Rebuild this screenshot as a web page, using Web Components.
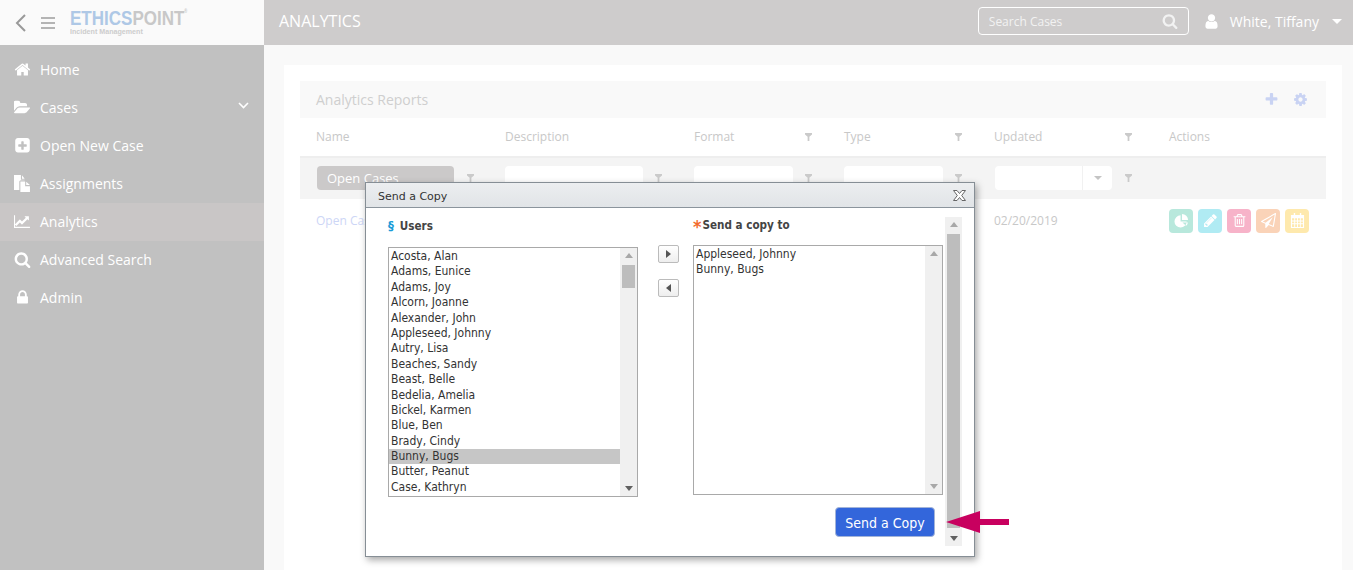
<!DOCTYPE html>
<html>
<head>
<meta charset="utf-8">
<title>Analytics</title>
<style>
  html, body { margin: 0; height: 100%; overflow: hidden; }
  body { font-family: "Open Sans", "Liberation Sans", sans-serif; background: #f9f9f9; }
</style>
</head>
<body>
<app-shell>
  <side-nav slot="side">
    <nav-item icon="home" label="Home"></nav-item>
    <nav-item icon="folder" label="Cases" expandable></nav-item>
    <nav-item icon="plusSquare" label="Open New Case"></nav-item>
    <nav-item icon="files" label="Assignments"></nav-item>
    <nav-item icon="chart" label="Analytics" active></nav-item>
    <nav-item icon="search" label="Advanced Search"></nav-item>
    <nav-item icon="lock" label="Admin"></nav-item>
  </side-nav>
  <top-bar slot="top" heading="ANALYTICS" user="White, Tiffany"></top-bar>
  <report-table></report-table>
  <copy-dialog slot="overlay"></copy-dialog>
</app-shell>

<script>
// FontAwesome-like glyphs, all as [viewBox, path]
const ICONS = {
  home: ['0 0 1792 1792', 'M1472 992v480q0 26-19 45t-45 19h-384v-384h-256v384h-384q-26 0-45-19t-19-45v-480q0-1 .5-3t.5-3l575-474 575 474q1 2 1 6zm223-69l-62 74q-8 9-21 11h-3q-13 0-21-7l-692-577-692 577q-12 8-24 7-13-2-21-11l-62-74q-8-10-7-23.5t11-21.5l719-599q32-26 76-26t76 26l244 204v-195q0-14 9-23t23-9h192q14 0 23 9t9 23v408l219 182q10 8 11 21.5t-7 23.5z'],
  folder: ['0 0 1920 1792', 'M1815 952q0 31-31 66l-336 396q-43 51-120.5 86.5t-143.5 35.5h-1088q-34 0-60.5-13t-26.5-43q0-31 31-66l336-396q43-51 120.5-86.5t143.5-35.5h1088q34 0 60.5 13t26.5 43zm-343-344v160h-832q-94 0-197 47.5t-164 119.5l-337 396-5 6q0-4-.5-12.5t-.5-12.5v-960q0-92 66-158t158-66h320q92 0 158 66t66 158v32h544q92 0 158 66t66 158z'],
  plusSquare: ['0 0 1792 1792', 'M1344 960v-128q0-26-19-45t-45-19h-256v-256q0-26-19-45t-45-19h-128q-26 0-45 19t-19 45v256h-256q-26 0-45 19t-19 45v128q0 26 19 45t45 19h256v256q0 26 19 45t45 19h128q26 0 45-19t19-45v-256h256q26 0 45-19t19-45zm320-576v960q0 119-84.5 203.5t-203.5 84.5h-960q-119 0-203.5-84.5t-84.5-203.5v-960q0-119 84.5-203.5t203.5-84.5h960q119 0 203.5 84.5t84.5 203.5z'],
  files: ['0 0 16 16', 'M0 0h6.5v4.5H10V5H6.500C5.700 5 5 5.700 5 6.500V14H0zM7.500 0.300L10 3.500H7.500zM6 6h4.500v4.500H15V16H6zM11.500 6.300L15 9.500H11.500z'],
  chart: ['0 0 2048 1792', 'M1920 1536v128h-1920v-1536h128v1408h1792zm-128-1248v435q0 21-19.5 29.5t-35.5-7.5l-121-121-633 633q-10 10-23 10t-23-10l-233-233-416 416-192-192 585-585q10-10 23-10t23 10l233 233 464-464-121-121q-16-16-7.5-35.5t29.5-19.5h435q14 0 23 9t9 23z'],
  search: ['0 0 1792 1792', 'M1216 832q0-185-131.5-316.5t-316.5-131.5-316.5 131.5-131.5 316.5 131.5 316.5 316.5 131.5 316.5-131.5 131.5-316.5zm512 832q0 52-38 90t-90 38q-54 0-90-38l-343-342q-179 124-399 124-143 0-273.5-55.5t-225-150-150-225-55.5-273.5 55.5-273.5 150-225 225-150 273.5-55.5 273.5 55.5 225 150 150 225 55.5 273.5q0 220-124 399l343 343q37 37 37 90z'],
  lock: ['0 0 1792 1792', 'M640 768h512v-192q0-106-75-181t-181-75-181 75-75 181v192zm832 96v576q0 40-28 68t-68 28h-960q-40 0-68-28t-28-68v-576q0-40 28-68t68-28h32v-192q0-184 132-316t316-132 316 132 132 316v192h32q40 0 68 28t28 68z'],
  user: ['0 0 1792 1792', 'M1536 1399q0 109-62.5 187t-150.5 78h-854q-88 0-150.5-78t-62.5-187q0-85 8.5-160.5t31.5-152 58.5-131 94-89 134.5-34.5q131 128 313 128t313-128q76 0 134.5 34.5t94 89 58.5 131 31.5 152 8.5 160.5zm-256-887q0 159-112.5 271.5t-271.5 112.5-271.5-112.5-112.5-271.5 112.5-271.5 271.5-112.5 271.5 112.5 112.5 271.5z'],
  plus: ['0 0 1792 1792', 'M1600 736v192q0 40-28 68t-68 28h-416v416q0 40-28 68t-68 28h-192q-40 0-68-28t-28-68v-416h-416q-40 0-68-28t-28-68v-192q0-40 28-68t68-28h416v-416q0-40 28-68t68-28h192q40 0 68 28t28 68v416h416q40 0 68 28t28 68z'],
  cog: ['0 0 1792 1792', 'M1152 896q0-106-75-181t-181-75-181 75-75 181 75 181 181 75 181-75 75-181zm512-109v222q0 12-8 23t-20 13l-185 28q-19 54-39 91 35 50 107 138 10 12 10 25t-9 23q-27 37-99 108t-94 71q-12 0-26-9l-138-108q-44 23-91 38-16 136-29 186-7 28-36 28h-222q-14 0-24.500-8.500t-11.500-21.500l-28-184q-49-16-90-37l-141 107q-10 9-25 9-14 0-25-11-126-114-165-168-7-10-7-23 0-12 8-23 15-21 51-66.500t54-70.500q-27-50-41-99l-183-27q-13-2-21-12.500t-8-23.500v-222q0-12 8-23t19-13l186-28q14-46 39-92-40-57-107-138-10-12-10-24 0-10 9-23 26-36 98.500-107.500t94.500-71.500q13 0 26 10l138 107q44-23 91-38 16-136 29-186 7-28 36-28h222q14 0 24.500 8.500t11.500 21.500l28 184q49 16 90 37l142-107q9-9 24-9 13 0 25 10 129 119 165 170 7 8 7 22 0 12-8 23-15 21-51 66.500t-54 70.500q26 50 41 98l183 28q13 2 21 12.500t8 23.500z'],
  pencil: ['0 0 1792 1792', 'M491 1536l91-91-235-235-91 91v107h128v128h107zm523-928q0-22-22-22-10 0-17 7l-542 542q-7 7-7 17 0 22 22 22 10 0 17-7l542-542q7-7 7-17zm-54-192l416 416-832 832h-416v-416zm683 96q0 53-37 90l-166 166-416-416 166-165q36-38 90-38 53 0 91 38l235 234q37 39 37 91z'],
  plane: ['0 0 1792 1792', 'M1764 11q33 24 27 64l-256 1536q-5 29-32 45-14 8-31 8-11 0-24-5l-527-215-298 327q-18 21-47 21-14 0-23-4-19-7-30-23.500t-11-36.500v-452l-472-193q-37-14-40-55-3-39 32-59l1664-960q35-21 68 2zm-342 1499l221-1323-1434 827 336 137 863-639-478 797z'],
  trash: ['0 0 1792 1792', 'M704 736v576q0 14-9 23t-23 9h-64q-14 0-23-9t-9-23v-576q0-14 9-23t23-9h64q14 0 23 9t9 23zm256 0v576q0 14-9 23t-23 9h-64q-14 0-23-9t-9-23v-576q0-14 9-23t23-9h64q14 0 23 9t9 23zm256 0v576q0 14-9 23t-23 9h-64q-14 0-23-9t-9-23v-576q0-14 9-23t23-9h64q14 0 23 9t9 23zm128 724v-948h-896v948q0 22 7 40.500t14.500 27 10.500 8.500h832q3 0 10.500-8.500t14.500-27 7-40.500zm-672-1076h448l-48-117q-7-9-17-11h-317q-10 2-17 11zm928 32v64q0 14-9 23t-23 9h-96v948q0 83-47 143.500t-113 60.500h-832q-66 0-113-58.500t-47-141.500v-952h-96q-14 0-23-9t-9-23v-64q0-14 9-23t23-9h309l70-167q15-37 54-63t79-26h320q40 0 79 26t54 63l70 167h309q14 0 23 9t9 23z'],
  pie: ['0 0 16 16', 'M7 2.500V9h6.500A6.500 6.500 0 1 1 7 2.500zM8.500 1A6.500 6.500 0 0 1 15 7.500H8.500zM9 10h5.800a6.500 6.500 0 0 1-1.900 3.700z'],
  calendar: ['0 0 16 16', 'M4 0h1.500v2H10.500V0H12v2h3v14H1V2h3zM2.200 5.500V8h2.300V5.500zM5.500 5.500V8h2V5.500zM8.500 5.500V8h2V5.500zM11.500 5.500V8h2.300V5.500zM2.200 9V11h2.300V9zM5.500 9V11h2V9zM8.500 9V11h2V9zM11.500 9V11h2.300V9zM2.200 12V14.800h2.300V12zM5.500 12V14.800h2V12zM8.500 12V14.800h2V12zM11.500 12V14.800h2.300V12z'],
  filter: ['0 0 8 9', 'M0 0h8v1.500L5 4.200V9H3V4.200L0 1.500z']
};

function icon(name, w, h = w) {
  const [box, d] = ICONS[name];
  return `<svg width="${w}" height="${h}" viewBox="${box}" fill="currentColor" fill-rule="evenodd" aria-hidden="true"><path d="${d}"/></svg>`;
}

class AppShell extends HTMLElement {
  constructor() {
    super();
    this.attachShadow({ mode: 'open' }).innerHTML = `
      <style>
        :host { display: grid; grid-template-columns: 264px 1fr; grid-template-rows: 45px 1fr; height: 570px; position: relative; overflow: hidden; }
        .logo { background: #fafafa; display: flex; align-items: center; padding-left: 14px; gap: 14px; color: #a9a9a9; }
        .menu { display: flex; flex-direction: column; gap: 3px; width: 14px; }
        .menu i { height: 2px; background: #b4b4b4; }
        .brand { display: flex; flex-direction: column; margin: -1px 0 0 1px; }
        .word { font: 700 21px/19px "Liberation Sans", sans-serif; color: #c8c8c8; display: inline-block; width: 117px; white-space: nowrap; transform: scaleX(.81); transform-origin: 0 50%; }
        .word b { color: #aec8e6; }
        .word sup { font-size: 5px; line-height: 0; vertical-align: 12px; }
        .tag { font: 700 8px/10px "Liberation Sans", sans-serif; color: #cdcdcd; white-space: nowrap; transform: scaleX(.89); transform-origin: 0 50%; }
        .side { background: #c1c1c1; }
        .main { padding: 20px 11px 0 20px; min-width: 0; }
      </style>
      <div class="logo">
        <svg width="13" height="20" viewBox="0 0 13 20" fill="none" stroke="#999" stroke-width="2"><path d="M11 2 3 10l8 8"/></svg>
        <div class="menu"><i></i><i></i><i></i></div>
        <div class="brand">
          <span class="word"><b>ETHICS</b>POINT<sup>®</sup></span>
          <span class="tag">Incident Management</span>
        </div>
      </div>
      <slot name="top"></slot>
      <div class="side"><slot name="side"></slot></div>
      <div class="main"><slot></slot></div>
      <slot name="overlay"></slot>`;
  }
}

class SideNav extends HTMLElement {
  constructor() {
    super();
    this.attachShadow({ mode: 'open' }).innerHTML = `
      <style>:host { display: flex; flex-direction: column; padding-top: 6px; }</style>
      <slot></slot>`;
  }
}

class NavItem extends HTMLElement {
  connectedCallback() {
    if (this.shadowRoot) return;
    const chevron = this.hasAttribute('expandable')
      ? `<svg class="more" width="11" height="7" viewBox="0 0 11 7" fill="none" stroke="#fff" stroke-width="1.600"><path d="M1 1l4.500 4.500L10 1"/></svg>` : '';
    this.attachShadow({ mode: 'open' }).innerHTML = `
      <style>
        :host { display: flex; align-items: center; height: 38px; box-sizing: border-box; padding: 0 15px 2px 14px; color: #fff; font-size: 14px; }
        :host([active]) { background: #c9c6c6; }
        .ico { width: 26px; display: flex; align-items: center; flex: none; }
        .more { margin-left: auto; margin-top: -3px; }
      </style>
      <span class="ico">${icon(this.getAttribute('icon'), 17)}</span>
      <span>${this.getAttribute('label')}</span>
      ${chevron}`;
  }
}

class TopBar extends HTMLElement {
  connectedCallback() {
    if (this.shadowRoot) return;
    this.attachShadow({ mode: 'open' }).innerHTML = `
      <style>
        :host { display: flex; align-items: center; box-sizing: border-box; background: #cecccc; color: #fff; padding: 0 11px 3px 15px; }
        h1 { margin: 0; font-size: 16px; font-weight: 400; margin-right: auto; }
        .search { height: 28px; border: 1px solid #fff; border-radius: 4px; display: flex; align-items: center; justify-content: space-between; padding: 0 10px; box-sizing: border-box; width: 211px; font-size: 12px; color: #f2f2f2; }
        .user { margin: 0 10px 0 14px; display: flex; }
        .name { font-size: 14px; }
        .caret { margin-left: 13px; width: 0; height: 0; border: 5px solid transparent; border-top: 5px solid #fff; border-bottom: 0; }
      </style>
      <h1>${this.getAttribute('heading')}</h1>
      <div class="search"><span>Search Cases</span>${icon('search', 16)}</div>
      <span class="user">${icon('user', 17)}</span>
      <span class="name">${this.getAttribute('user')}</span>
      <span class="caret"></span>`;
  }
}

class ReportTable extends HTMLElement {
  constructor() {
    super();
    const cols = '189px 189px 150px 150px 175px 1fr';
    const filter = `<span class="f">${icon('filter', 7, 8)}</span>`;
    const input = (w, tail = '') => `<div class="cell"><span class="inp" style="width:${w}px">${tail}</span>${filter}</div>`;
    const head = (t, f) => `<div class="cell h">${f ? `<span class="t" style="width:${f}px">${t}</span>${filter}` : t}</div>`;
    this.attachShadow({ mode: 'open' }).innerHTML = `
      <style>
        :host { display: block; background: #fff; height: 505px; padding: 16px 16px 0; color: #c8c8c8; }
        .title { height: 37px; background: #f9f9f9; display: flex; align-items: center; padding: 0 18px 0 16px; font-size: 14px; color: #cfcfcf; }
        .title .sp { margin-left: auto; display: flex; gap: 14px; color: #c9d3f3; }
        .row { display: grid; grid-template-columns: ${cols}; align-items: center; box-sizing: border-box; }
        .head { height: 40px; padding-bottom: 1px; border-bottom: 2px solid #eee; font-size: 12px; }
        .filters { height: 41px; padding-bottom: 1px; background: #f4f4f4; }
        .body { height: 43px; font-size: 12px; }
        .cell { padding-left: 16px; display: flex; align-items: center; white-space: nowrap; overflow: hidden; }
        .inp { height: 24px; background: #fff; border-radius: 4px; display: flex; box-sizing: border-box; align-items: center; }
        .chip { background: #cbc9c9; color: #fff; font-size: 13px; padding-left: 10px; margin-left: 1px; }
        .f { color: #cacaca; display: flex; margin-left: 12px; }
        .first .f, .last .f { margin-left: 13px; }
        .last .inp { margin-left: 1px; }
        .t { display: inline-block; }
        .split { margin-left: auto; width: 29px; height: 24px; border-left: 1px solid #f1f1f1; display: flex; align-items: center; justify-content: center; }
        .split i { width: 0; height: 0; border: 4px solid transparent; border-top: 4px solid #c4c4c4; border-bottom: 0; }
        a { color: #cdd6f6; }
        .acts { display: flex; gap: 5px; }
        .act { width: 24px; height: 24px; border-radius: 4px; color: #fff; display: flex; align-items: center; justify-content: center; }
      </style>
      <div class="title"><span>Analytics Reports</span><span class="sp">${icon('plus', 15)}${icon('cog', 15)}</span></div>
      <div class="row head">
        ${head('Name')}${head('Description')}${head('Format', 99)}${head('Type', 99)}${head('Updated', 119)}${head('Actions')}
      </div>
      <div class="row filters">
        <div class="cell first"><span class="inp chip" style="width:137px">Open Cases</span>${filter}</div>
        ${input(138)}${input(99)}${input(99)}
        <div class="cell last"><span class="inp" style="width:117px"><span class="split"><i></i></span></span>${filter}</div>
        <div></div>
      </div>
      <div class="row body">
        <div class="cell"><a>Open Cases</a></div><div></div><div></div><div></div>
        <div class="cell">02/20/2019</div>
        <div class="cell acts">
          <span class="act" style="background:#b8e8dc">${icon('pie', 15)}</span>
          <span class="act" style="background:#b0ebf3">${icon('pencil', 15)}</span>
          <span class="act" style="background:#f7b3c9">${icon('trash', 15)}</span>
          <span class="act" style="background:#fad3b8">${icon('plane', 15)}</span>
          <span class="act" style="background:#fee9ad">${icon('calendar', 15)}</span>
        </div>
      </div>`;
  }
}

// little grey scroll track with arrows, used by both lists and by the dialog body
class ScrollTrack extends HTMLElement {
  connectedCallback() {
    if (this.shadowRoot) return;
    const top = this.getAttribute('thumb-top');
    const len = this.getAttribute('thumb-len');
    this.attachShadow({ mode: 'open' }).innerHTML = `
      <style>
        :host { display: flex; flex-direction: column; align-items: center; width: 17px; background: #f0f0f0; flex: none; }
        i { width: 0; height: 0; border: 4px solid transparent; margin-top: 5px; border-bottom: 5px solid #a8a8a8; border-top: 0; flex: none; }
        i.down { margin: auto 0 5px; border-bottom: 0; border-top: 5px solid ${this.hasAttribute('dark') ? '#606060' : '#a8a8a8'}; }
        b { display: block; width: 13px; flex: none; background: #bdbdbd; margin-top: ${top}px; height: ${len}px; }
      </style>
      <i></i><b></b><i class="down"></i>`;
  }
}

class ListBox extends HTMLElement {
  connectedCallback() {
    if (this.shadowRoot) return;
    const selected = this.getAttribute('selected');
    const rows = this.getAttribute('items').split('|').map(n =>
      `<div class="o${n === selected ? ' sel' : ''}">${n}</div>`).join('');
    this.attachShadow({ mode: 'open' }).innerHTML = `
      <style>
        :host { display: flex; width: 250px; height: 250px; box-sizing: border-box; border: 1px solid #a9a9a9; font: 12px/15.400px "DejaVu Sans Condensed", "Liberation Sans", sans-serif; color: #333; }
        .opts { flex: 1; overflow: hidden; padding-top: 1px; min-width: 0; }
        .o { padding-left: 2px; height: 15.400px; white-space: nowrap; }
        .sel { background: #c6c6c6; }
      </style>
      <div class="opts">${rows}</div>
      <scroll-track thumb-top="${this.getAttribute('thumb-top') || 0}" thumb-len="${this.getAttribute('thumb-len') || 0}" ${this.hasAttribute('dark') ? 'dark' : ''}></scroll-track>`;
  }
}

class CopyDialog extends HTMLElement {
  constructor() {
    super();
    const users = 'Acosta, Alan|Adams, Eunice|Adams, Joy|Alcorn, Joanne|Alexander, John|Appleseed, Johnny|Autry, Lisa|Beaches, Sandy|Beast, Belle|Bedelia, Amelia|Bickel, Karmen|Blue, Ben|Brady, Cindy|Bunny, Bugs|Butter, Peanut|Case, Kathryn';
    this.attachShadow({ mode: 'open' }).innerHTML = `
      <style>
        :host { display: flex; flex-direction: column; position: absolute; left: 365px; top: 182px; width: 610px; height: 375px; box-sizing: border-box; background: #fff; border: 1px solid #868e95; box-shadow: 2px 3px 7px rgba(0,0,0,.35); font-family: "DejaVu Sans Condensed", "Liberation Sans", sans-serif; }
        .bar { height: 25px; box-sizing: border-box; flex: none; display: flex; align-items: center; justify-content: space-between; padding: 2px 8px 0 12px; background: linear-gradient(#eceef0, #e1e4e7); border-bottom: 1px solid #8b949c; font: 11px "DejaVu Sans", sans-serif; color: #333; }
        .bar svg { margin-top: -2px; }
        .body { flex: 1; display: flex; min-height: 0; padding: 9px 12px 10px 22px; }
        .content { flex: 1; display: flex; flex-direction: column; min-width: 0; }
        .transfer { display: flex; }
        .lbl { font-weight: 700; font-size: 11.600px; line-height: 18px; color: #444; white-space: nowrap; }
        .col.left .lbl { height: 30px; }
        .col.left .lbl span { color: #1a9bd7; font-size: 13px; margin-right: 6px; }
        .col.right .lbl { height: 29px; margin-top: -1px; }
        .star { color: #f26a2c; font-size: 18px; line-height: 0; vertical-align: -4px; margin-right: 1px; }
        .moves { display: flex; flex-direction: column; gap: 16px; width: 21px; margin: 28px 14px 0 20px; }
        .mv { width: 21px; height: 18px; box-sizing: border-box; border: 1px solid #bbb; border-radius: 2px; background: linear-gradient(#fff, #eee); display: flex; align-items: center; justify-content: center; }
        .r { border: 4px solid transparent; border-left: 5px solid #555; border-right: 0; }
        .l { border: 4px solid transparent; border-right: 5px solid #555; border-left: 0; }
        .foot { display: flex; justify-content: flex-end; padding: 10px 9px 0 0; }
        button { width: 100px; height: 30px; box-sizing: border-box; padding: 1px 0 0; background: #3366db; color: #fff; border: 1px solid #a3b4d8; border-radius: 4px; font: 14px "DejaVu Sans Condensed", sans-serif; }
        .gutter { margin-left: 1px; }
        .arrow { position: absolute; left: 580px; top: 327px; }
      </style>
      <div class="bar">
        <span>Send a Copy</span>
        <svg width="13" height="11" viewBox="0 0 13 11" fill="#fff" stroke="#666"><path d="M.5 .5h3.500l2.500 3 2.500-3h3.500l-3.800 5 3.800 5h-3.500l-2.500-3-2.500 3H.5l3.800-5z"/></svg>
      </div>
      <div class="body">
        <div class="content">
          <div class="transfer">
            <div class="col left">
              <div class="lbl"><span>§</span>Users</div>
              <list-box items="${users}" selected="Bunny, Bugs" thumb-top="7" thumb-len="23" dark></list-box>
            </div>
            <div class="moves">
              <span class="mv"><i class="r"></i></span>
              <span class="mv"><i class="l"></i></span>
            </div>
            <div class="col right">
              <div class="lbl"><span class="star">*</span>Send a copy to</div>
              <list-box items="Appleseed, Johnny|Bunny, Bugs"></list-box>
            </div>
          </div>
          <div class="foot"><button>Send a Copy</button></div>
        </div>
        <scroll-track class="gutter" thumb-top="7" thumb-len="294" dark></scroll-track>
      </div>
      <svg class="arrow" width="63" height="24" viewBox="0 0 63 24"><path d="M0 12 34 1v8h29v6H34v8z" fill="#c8005f"/></svg>`;
  }
}

customElements.define('app-shell', AppShell);
customElements.define('side-nav', SideNav);
customElements.define('nav-item', NavItem);
customElements.define('top-bar', TopBar);
customElements.define('report-table', ReportTable);
customElements.define('scroll-track', ScrollTrack);
customElements.define('list-box', ListBox);
customElements.define('copy-dialog', CopyDialog);
</script>
</body>
</html>
